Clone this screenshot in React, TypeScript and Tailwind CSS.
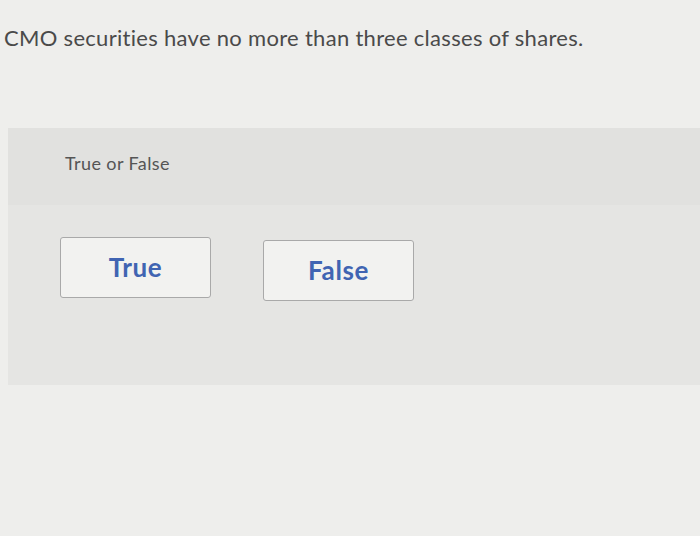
import React from "react";

const choices = [
  { label: "True", shift: "mt-0" },
  { label: "False", shift: "mt-[3px]" },
];

export default function App() {
  return (
    <div className="h-[536px] w-[700px] overflow-hidden bg-[#eeeeec] font-['Lato',sans-serif]">
      <h1 className="pl-[4px] pt-[23px] text-[22px] leading-[30px] tracking-[0.3px] text-[#4a4a4a]">
        CMO securities have no more than three classes of shares.
      </h1>

      <div className="ml-[8px] mt-[75px] h-[257px] bg-[#e5e5e3]">
        <div className="h-[77px] bg-[#e1e1df] pl-[57px] pt-[23px] text-[18px] leading-[24px] tracking-[0.4px] text-[#555555]">
          True or False
        </div>
        <div className="flex gap-[52px] pl-[52px] pt-[32px]">
          {choices.map((c) => (
            <button
              key={c.label}
              className={`${c.shift} flex h-[61px] w-[151px] items-center justify-center rounded-[3px] border border-[#a9a9a9] bg-[#f2f2f0] text-[26px] font-bold tracking-[0.6px] text-[#4064b2]`}
            >
              {c.label}
            </button>
          ))}
        </div>
      </div>
    </div>
  );
}
